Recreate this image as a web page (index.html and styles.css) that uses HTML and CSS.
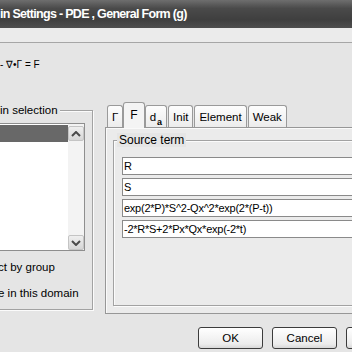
FILE: index.html
```html
<!DOCTYPE html>
<html>
<head>
<meta charset="utf-8">
<link rel="stylesheet" href="styles.css">
</head>
<body>
<div class="window">
  <div class="titlebar"><span class="title">in Settings - PDE , General Form (g)</span></div>
  <div class="toolband"></div>
  <div class="content">
    <div class="equation">- ∇•Γ = F</div>
    <div class="main">
      <fieldset class="group domains">
        <legend>in selection</legend>
        <div class="listbox">
          <div class="items"><div class="item selected"></div></div>
          <div class="scrollbar">
            <div class="sbtn"><svg width="10" height="6" viewBox="0 0 10 6"><path d="M1 5 L5 1 L9 5" fill="none" stroke="#4a4a4a" stroke-width="2"/></svg></div>
            <div class="track"></div>
            <div class="sbtn"><svg width="10" height="6" viewBox="0 0 10 6"><path d="M1 1 L5 5 L9 1" fill="none" stroke="#4a4a4a" stroke-width="2"/></svg></div>
          </div>
        </div>
        <div class="check first">ct by group</div>
        <div class="check second">e in this domain</div>
      </fieldset>
      <div class="tabs">
        <div class="tabrow">
          <div class="tab">Γ</div>
          <div class="tab active">F</div>
          <div class="tab">d<span class="sub">a</span></div>
          <div class="tab">Init</div>
          <div class="tab">Element</div>
          <div class="tab">Weak</div>
        </div>
        <div class="panel">
          <fieldset class="group source">
            <legend>Source term</legend>
            <div class="field">R</div>
            <div class="field">S</div>
            <div class="field">exp(2*P)*S^2-Qx^2*exp(2*(P-t))</div>
            <div class="field">-2*R*S+2*Px*Qx*exp(-2*t)</div>
          </fieldset>
        </div>
      </div>
    </div>
    <div class="buttons">
      <div class="btn">OK</div>
      <div class="btn">Cancel</div>
      <div class="btn"></div>
    </div>
  </div>
</div>
</body>
</html>
```
FILE: styles.css
```css
html, body {
  margin: 0;
  padding: 0;
  background: #e5e5e5;
  overflow: hidden;
}
.window {
  width: 460px;
  height: 352px;
  font-family: "Liberation Sans", Arial, sans-serif;
  font-size: 11.5px;
  color: #000;
}
.titlebar {
  height: 28px;
  background: linear-gradient(#6e6e6e 0%, #4a4a4a 30%, #3f3f3f 70%, #4e4e4e 100%);
  box-sizing: border-box;
  padding-top: 6px;
}
.title {
  color: #fff;
  font-weight: bold;
  font-size: 12.5px;
  letter-spacing: -0.7px;
  line-height: 16px;
  white-space: nowrap;
}
.toolband {
  height: 14px;
  background: #ebebeb;
  border-bottom: 1px solid #a6a6a6;
  box-shadow: 0 1px 0 #fafafa;
}
.content {
  background: #e5e5e5;
  padding-top: 15px;
}
.equation {
  font-size: 10px;
  line-height: 14px;
  white-space: nowrap;
}
.main {
  display: flex;
  align-items: flex-start;
  margin-top: 30px;
}
fieldset.group {
  margin: 0;
  border: 1px solid #a2a2a2;
  box-shadow: inset 1px 1px 0 #fbfbfb, 1px 1px 0 #fbfbfb;
  box-sizing: border-box;
  min-width: 0;
}
fieldset.group legend {
  padding: 0 2px;
  line-height: 14px;
  background: #e5e5e5;
  white-space: nowrap;
}
.domains {
  margin: 1px 0 0 -12px !important;
  width: 105px;
  padding: 6px 7px 9px 9px;
  flex: none;
}
.listbox {
  height: 128px;
  box-sizing: border-box;
  border: 1px solid #8e8e8e;
  background: #fff;
  display: flex;
}
.items {
  flex: 1;
  padding-top: 1px;
}
.item {
  height: 17px;
}
.item.selected {
  background: #686868;
}
.scrollbar {
  width: 16px;
  display: flex;
  flex-direction: column;
  background: #f3f3f3;
  padding-top: 2px;
}
.sbtn {
  height: 15px;
  box-sizing: border-box;
  border: 1px solid #c4c4c4;
  border-radius: 2px;
  background: linear-gradient(#efefef, #d6d6d6);
  display: flex;
  align-items: center;
  justify-content: center;
}
.track {
  flex: 1;
}
.check {
  line-height: 14px;
  white-space: nowrap;
}
.check.first { margin-top: 9px; }
.check.second { margin-top: 12px; }
.tabs {
  margin-left: 12px;
  width: 320px;
  flex: none;
}
.tabrow {
  display: flex;
  align-items: flex-end;
  padding-left: 2px;
  height: 25px;
}
.tab {
  height: 22px;
  box-sizing: border-box;
  border: 1px solid #9a9a9a;
  border-bottom: none;
  border-radius: 3px 3px 0 0;
  background: linear-gradient(#fdfdfd, #ececec);
  padding: 3px 4px 0;
  margin-right: 1px;
  line-height: 16px;
  white-space: nowrap;
}
.tab.active {
  height: 26px;
  margin: 0 0 -1px -1px;
  padding: 4px 6px 0;
  background: #f4f4f4;
  font-size: 12px;
  position: relative;
  z-index: 1;
}
.tab .sub {
  font-weight: bold;
  font-size: 9px;
  vertical-align: -4px;
  margin-left: 1px;
}
.panel {
  height: 187px;
  box-sizing: border-box;
  border: 1px solid #979797;
  background: #ebebeb;
  box-shadow: inset 1px 1px 0 #fafafa;
  padding: 5px 0 0 7px;
}
.source {
  height: 173px;
  padding: 10px 0 0 8px;
}
.source legend {
  margin-left: -5px;
  font-size: 12px;
  background: #ebebeb;
}
.field {
  height: 18px;
  box-sizing: border-box;
  border: 1px solid #8a8a8a;
  background: #fff;
  font-size: 11px;
  letter-spacing: -0.25px;
  line-height: 16px;
  padding: 0 1px;
  margin-bottom: 3px;
  white-space: nowrap;
}
.buttons {
  display: flex;
  gap: 9px;
  padding-left: 198px;
  margin-top: 13px;
}
.btn {
  width: 65px;
  height: 22px;
  box-sizing: border-box;
  border: 1px solid #3c3c3c;
  border-radius: 3px;
  background: linear-gradient(#ffffff, #ececec 80%, #d8d8d8);
  text-align: center;
  line-height: 20px;
  flex: none;
}
```
